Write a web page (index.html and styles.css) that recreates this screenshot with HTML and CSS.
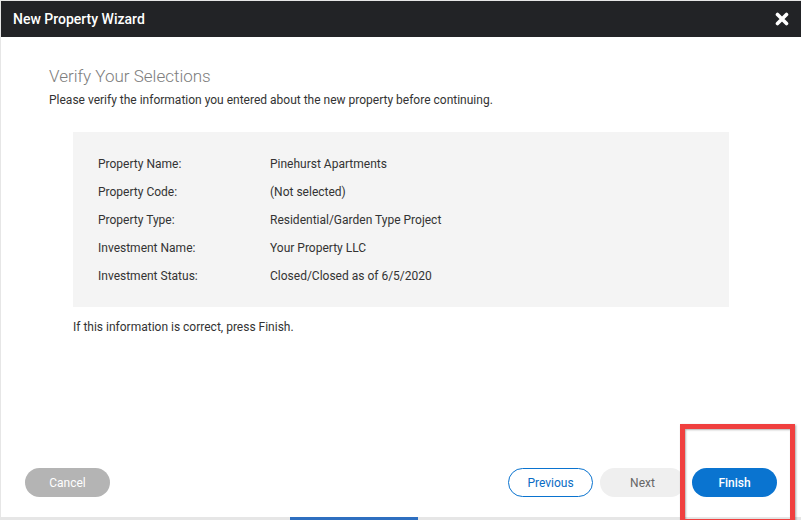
FILE: index.html
```html
<!DOCTYPE html>
<html>
<head>
<meta charset="utf-8">
<link rel="stylesheet" href="styles.css">
</head>
<body>
<div class="modal">
  <div class="header">
    <span class="title">New Property Wizard</span>
    <svg class="close" width="14" height="14" viewBox="0 0 14 14"><path d="M2.5 2.5 L11.5 11.5 M11.5 2.5 L2.5 11.5" stroke="#fff" stroke-width="3.6" stroke-linecap="round"/></svg>
  </div>
  <div class="content">
    <h1 class="heading">Verify Your Selections</h1>
    <p class="intro">Please verify the information you entered about the new property before continuing.</p>
    <div class="summary">
      <div class="row"><span class="label">Property Name:</span><span class="value">Pinehurst Apartments</span></div>
      <div class="row"><span class="label">Property Code:</span><span class="value">(Not selected)</span></div>
      <div class="row"><span class="label">Property Type:</span><span class="value">Residential/Garden Type Project</span></div>
      <div class="row"><span class="label">Investment Name:</span><span class="value">Your Property LLC</span></div>
      <div class="row"><span class="label">Investment Status:</span><span class="value">Closed/Closed as of 6/5/2020</span></div>
    </div>
    <p class="note">If this information is correct, press Finish.</p>
  </div>
  <div class="footer">
    <button class="btn btn-cancel">Cancel</button>
    <div class="nav">
      <button class="btn btn-prev">Previous</button>
      <button class="btn btn-next">Next</button>
      <button class="btn btn-finish">Finish</button>
    </div>
  </div>
</div>
<div class="highlight"></div>
</body>
</html>
```
FILE: styles.css
```css
html, body {
  margin: 0;
  padding: 0;
}
body {
  width: 801px;
  height: 520px;
  overflow: hidden;
  position: relative;
  font-family: Roboto, "Liberation Sans", Arial, sans-serif;
  background-color: #e6e6e6;
  background-image: linear-gradient(to right, #e6e6e6 0, #e6e6e6 290px, #2e6fc0 290px, #2e6fc0 418px, #e6e6e6 418px);
  background-size: 801px 4px;
  background-position: left bottom;
  background-repeat: no-repeat;
}
.modal {
  margin: 1px 0 0 1px;
  width: 800px;
  height: 516px;
  background: #fff;
  display: flex;
  flex-direction: column;
}
.header {
  height: 36px;
  flex: none;
  background: #222326;
  display: flex;
  align-items: center;
  justify-content: space-between;
  padding: 0 12px 0 12px;
}
.title {
  color: #fff;
  font-size: 14px;
  font-weight: 500;
}
.close {
  display: block;
}
.content {
  flex: 1;
  padding: 28px 0 0 48px;
}
.heading {
  margin: 0;
  font-size: 17px;
  font-weight: 300;
  color: #7d7d7d;
  line-height: 22px;
}
.intro {
  margin: 6px 0 0;
  font-size: 12px;
  line-height: 14px;
  color: #333;
}
.summary {
  margin: 25px 0 0 24px;
  width: 656px;
  height: 175px;
  box-sizing: border-box;
  background: #f4f4f4;
  padding: 18px 0 0 25px;
}
.row {
  display: flex;
  height: 28px;
  align-items: center;
  font-size: 12px;
  color: #333;
}
.label {
  width: 172px;
}
.note {
  margin: 13px 0 0 24px;
  font-size: 12px;
  line-height: 14px;
  color: #333;
}
.footer {
  flex: none;
  display: flex;
  justify-content: space-between;
  align-items: center;
  padding: 0 24px 20px 24px;
}
.nav {
  display: flex;
  gap: 7px;
}
.btn {
  width: 85px;
  height: 29px;
  border-radius: 15px;
  border: 1px solid transparent;
  font-family: Roboto, "Liberation Sans", Arial, sans-serif;
  font-size: 12px;
  padding: 0;
  box-sizing: border-box;
}
.btn-cancel {
  background: #b4b4b4;
  color: #fff;
}
.btn-prev {
  background: #fff;
  border-color: #0a73cf;
  color: #0a6cc4;
}
.btn-next {
  background: #efefef;
  color: #666;
}
.btn-finish {
  background: #0a74d0;
  color: #fff;
  font-weight: 500;
}
.highlight {
  position: absolute;
  left: 680px;
  top: 424px;
  width: 115px;
  height: 100px;
  box-sizing: border-box;
  border: 5px solid #f0403f;
  box-shadow: 1px 1px 2px rgba(0,0,0,0.35), inset 1px 1px 2px rgba(0,0,0,0.3);
}
```
